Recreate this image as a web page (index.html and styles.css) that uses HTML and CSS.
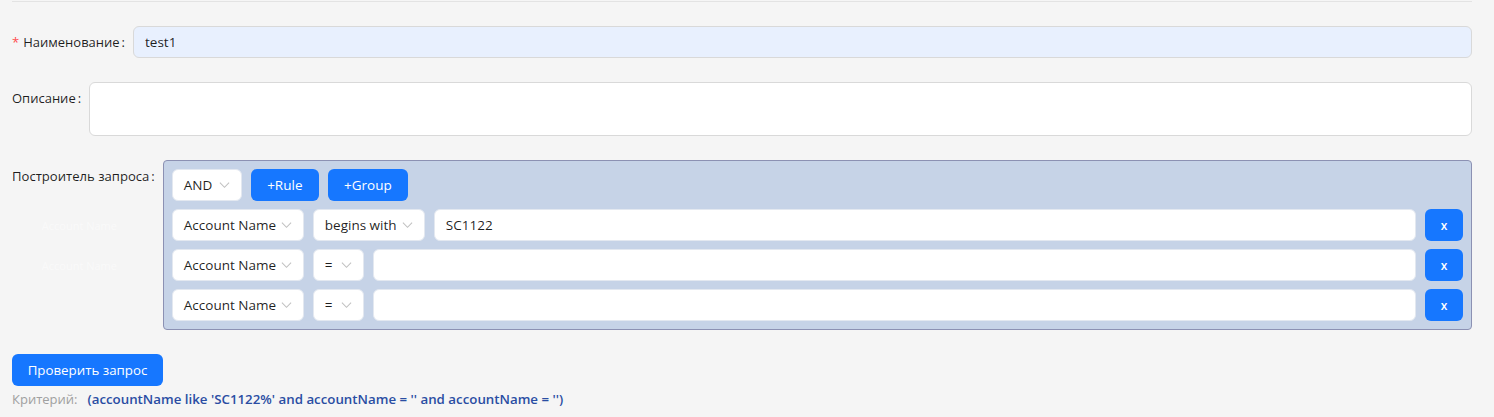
FILE: index.html
```html
<!DOCTYPE html>
<html lang="ru">
<head>
<meta charset="utf-8">
<title>Query</title>
<link rel="stylesheet" href="styles.css">
</head>
<body>
<div class="page">
  <form class="form">
    <div class="item">
      <label class="label"><span class="req">*</span>Наименование<span class="colon">:</span></label>
      <div class="control"><input class="input input-filled" type="text" value="test1"></div>
    </div>
    <div class="item">
      <label class="label">Описание<span class="colon">:</span></label>
      <div class="control"><textarea class="input textarea"></textarea></div>
    </div>
    <div class="item">
      <label class="label label-wide">Построитель запроса<span class="colon">:</span></label>
      <div class="control">
        <div class="builder">
          <div class="bar">
            <div class="select s-and"><span>AND</span><svg class="chev" viewBox="0 0 12 8"><path d="M1 1.5 6 6.5 11 1.5"/></svg></div>
            <button type="button" class="btn btn-rule">+Rule</button>
            <button type="button" class="btn btn-group">+Group</button>
          </div>
          <div class="rule">
            <span class="ghost">Account Name</span>
            <div class="select s-field"><span>Account Name</span><svg class="chev" viewBox="0 0 12 8"><path d="M1 1.5 6 6.5 11 1.5"/></svg></div>
            <div class="select s-op-long"><span>begins with</span><svg class="chev" viewBox="0 0 12 8"><path d="M1 1.5 6 6.5 11 1.5"/></svg></div>
            <input class="input value" type="text" value="SC1122">
            <button type="button" class="btn btn-x">x</button>
          </div>
          <div class="rule">
            <span class="ghost">Account Name</span>
            <div class="select s-field"><span>Account Name</span><svg class="chev" viewBox="0 0 12 8"><path d="M1 1.5 6 6.5 11 1.5"/></svg></div>
            <div class="select s-op"><span>=</span><svg class="chev" viewBox="0 0 12 8"><path d="M1 1.5 6 6.5 11 1.5"/></svg></div>
            <input class="input value" type="text" value="">
            <button type="button" class="btn btn-x">x</button>
          </div>
          <div class="rule">
            <div class="select s-field"><span>Account Name</span><svg class="chev" viewBox="0 0 12 8"><path d="M1 1.5 6 6.5 11 1.5"/></svg></div>
            <div class="select s-op"><span>=</span><svg class="chev" viewBox="0 0 12 8"><path d="M1 1.5 6 6.5 11 1.5"/></svg></div>
            <input class="input value" type="text" value="">
            <button type="button" class="btn btn-x">x</button>
          </div>
        </div>
      </div>
    </div>
    <div class="actions">
      <button type="button" class="btn btn-check">Проверить запрос</button>
      <div class="criteria"><span class="crit-label">Критерий:</span><span class="crit-value">(accountName like 'SC1122%' and accountName = '' and accountName = '')</span></div>
    </div>
  </form>
</div>
</body>
</html>
```
FILE: styles.css
```css
* { box-sizing: border-box; }
html, body {
  margin: 0;
  padding: 0;
  background: #f5f5f5;
}
body {
  font-family: "Open Sans", "Noto Sans", "Liberation Sans", sans-serif;
  font-size: 13px;
  color: rgba(0, 0, 0, 0.88);
}
.page {
  padding: 0 22px 0 12px;
}
.form {
  border-top: 1px solid #e3e3e3;
  margin-top: 1px;
  padding-top: 24px;
  display: flex;
  flex-direction: column;
  gap: 24px;
}
.item {
  display: flex;
  align-items: flex-start;
}
.label {
  height: 32px;
  display: flex;
  align-items: center;
  white-space: nowrap;
  color: rgba(0, 0, 0, 0.88);
}
.label-wide {
  font-size: 13.1px;
}
.req {
  color: #ff4d4f;
  margin-right: 4px;
}
.colon {
  margin: 0 8px 0 2px;
}
.control {
  flex: 1;
  min-width: 0;
}
.input {
  display: block;
  width: 100%;
  height: 32px;
  border: 1px solid #d9d9d9;
  border-radius: 6px;
  background: #fff;
  padding: 4px 11px;
  font: inherit;
  font-size: 13.5px;
  color: rgba(0, 0, 0, 0.88);
  outline: none;
}
.input-filled {
  background: #e8f0fe;
}
.textarea {
  height: 54px;
  resize: none;
}
.builder {
  background: #c6d3e7;
  border: 1px solid #8c91b3;
  border-radius: 4px;
  padding: 8px;
  display: flex;
  flex-direction: column;
  gap: 8px;
}
.bar, .rule {
  display: flex;
  gap: 9px;
  align-items: center;
  position: relative;
}
.ghost {
  position: absolute;
  left: -130px;
  top: 9px;
  color: #fdfdfd;
  font-size: 11px;
  opacity: 0.6;
}
.select {
  height: 32px;
  background: #fff;
  border: 1px solid #e3e8f0;
  border-radius: 6px;
  display: flex;
  align-items: center;
  justify-content: space-between;
  padding: 0 11px;
  flex: none;
  font-size: 13.5px;
}
.chev {
  width: 11px;
  height: 8px;
  fill: none;
  stroke: #c0c0c0;
  stroke-width: 1.1;
}
.s-and { width: 70px; }
.s-field { width: 132px; }
.s-op-long { width: 112px; }
.s-op { width: 51px; }
.value {
  flex: 1;
  width: auto;
  border-color: #e3e8f0;
}
.btn {
  height: 32px;
  border: none;
  border-radius: 6px;
  background: #1677ff;
  color: #fff;
  font: inherit;
  font-size: 13.5px;
  padding: 0 15px;
  cursor: pointer;
  flex: none;
  white-space: nowrap;
}
.btn-rule { width: 68px; }
.btn-group { width: 80px; }
.btn-x {
  width: 38px;
  font-size: 12px;
  font-weight: 600;
  padding: 0;
}
.actions {
  display: flex;
  flex-direction: column;
  align-items: flex-start;
  gap: 4px;
}
.btn-check {
  width: 151px;
  padding: 0;
  font-size: 13.3px;
}
.criteria {
  font-size: 13px;
  line-height: 18px;
}
.crit-label {
  color: #a0a0a0;
  margin-right: 10px;
}
.crit-value {
  color: #2a4da3;
  font-weight: 600;
  font-size: 13.3px;
}
```
